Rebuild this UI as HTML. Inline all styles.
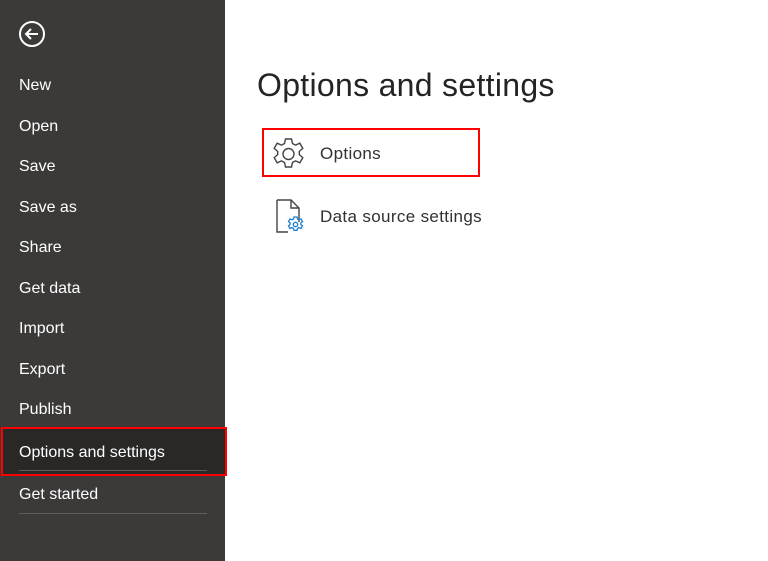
<!DOCTYPE html>
<html><head><style>
body{margin:0;width:768px;height:561px;background:#fff;font-family:"Liberation Sans",sans-serif;position:relative;overflow:hidden}
.side{position:absolute;left:0;top:0;width:225px;height:561px;background:#3b3a39}
.it{position:absolute;left:19px;color:#fff;font-size:16px;line-height:20px}
.sel{position:absolute;left:1px;top:427px;width:222px;height:45px;background:#292827;border:2.5px solid #f00}
.ln{position:absolute;left:19px;width:188px;height:1px;background:#605e5c}
h1{position:absolute;left:257px;top:67px;margin:0;font-size:32px;font-weight:normal;color:#252423;letter-spacing:0.3px}
.t{position:absolute;font-size:17px;color:#323130;letter-spacing:0.35px}
.box{position:absolute;left:262px;top:128px;width:214px;height:45px;border:2.5px solid #f00}
</style></head><body>
<div class="side">
<svg style="position:absolute;left:18px;top:20px" width="28" height="28" viewBox="0 0 28 28"><circle cx="14" cy="14" r="12" fill="none" stroke="#fff" stroke-width="2"/><path d="M20 14H8M13 9l-5 5 5 5" fill="none" stroke="#fff" stroke-width="2"/></svg>
<div class="it" style="top:76px">New</div>
<div class="it" style="top:117px">Open</div>
<div class="it" style="top:157px">Save</div>
<div class="it" style="top:198px">Save as</div>
<div class="it" style="top:238px">Share</div>
<div class="it" style="top:279px">Get data</div>
<div class="it" style="top:319px">Import</div>
<div class="it" style="top:360px">Export</div>
<div class="it" style="top:400px">Publish</div>
<div class="sel"></div>
<div class="it" style="top:443px">Options and settings</div>
<div class="ln" style="top:470px"></div>
<div class="it" style="top:485px">Get started</div>
<div class="ln" style="top:513px"></div>
</div>
<h1>Options and settings</h1>
<div class="box"></div>
<svg style="position:absolute;left:271px;top:137px" width="35" height="34" viewBox="0 0 35 34"><path d="M14.5 2h6l1 4.5 3 1.6 4.3-1.9 3 5.2-3.5 3v3.2l3.5 3-3 5.2-4.3-1.9-3 1.6-1 4.5h-6l-1-4.5-3-1.6-4.3 1.9-3-5.2 3.5-3v-3.2l-3.5-3 3-5.2 4.3 1.9 3-1.6z" fill="none" stroke="#444" stroke-width="1.4"/><circle cx="17.5" cy="17" r="5.5" fill="none" stroke="#444" stroke-width="1.4"/></svg>
<div class="t" style="left:320px;top:144px">Options</div>
<svg style="position:absolute;left:274px;top:198px" width="34" height="38" viewBox="0 0 34 38"><path d="M3 2h14l8 8v14M3 2v32h11" fill="none" stroke="#444" stroke-width="1.4"/><path d="M17 2v8h8" fill="none" stroke="#444" stroke-width="1.4"/><path d="M20 19h3l.5 2 1.5.8 2-.9 1.5 2.6-1.6 1.4v1.6l1.6 1.4-1.5 2.6-2-.9-1.5.8-.5 2h-3l-.5-2-1.5-.8-2 .9-1.5-2.6 1.6-1.4v-1.6l-1.6-1.4 1.5-2.6 2 .9 1.5-.8z" fill="none" stroke="#1a7fd4" stroke-width="1.3"/><circle cx="21.5" cy="26.5" r="2.2" fill="none" stroke="#1a7fd4" stroke-width="1.3"/></svg>
<div class="t" style="left:320px;top:207px">Data source settings</div>
</body></html>
